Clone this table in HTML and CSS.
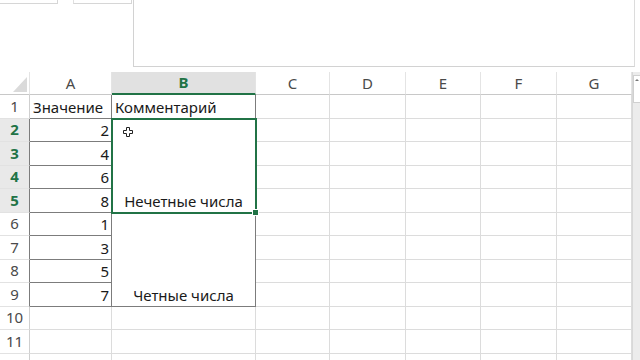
FILE: index.html
```html
<!DOCTYPE html>
<html lang="ru">
<head>
<meta charset="utf-8">
<title>Лист1</title>
<link rel="stylesheet" href="styles.css">
</head>
<body>
<div class="top">
  <div class="top-left">
    <div class="tab tab-a"></div>
    <div class="tab tab-b"></div>
  </div>
  <div class="panel"></div>
</div>
<div class="sheet">
  <div class="grid">
    <!-- column headers -->
    <div class="c corner"><span class="tri"></span></div>
    <div class="c ch">A</div>
    <div class="c ch sel">B</div>
    <div class="c ch">C</div>
    <div class="c ch">D</div>
    <div class="c ch">E</div>
    <div class="c ch">F</div>
    <div class="c ch">G</div>

    <!-- row 1 -->
    <div class="c rh">1</div>
    <div class="c d">Значение</div>
    <div class="c d b1">Комментарий</div>
    <div class="c"></div><div class="c"></div><div class="c"></div><div class="c"></div><div class="c"></div>

    <!-- row 2 -->
    <div class="c rh rsel dl">2</div>
    <div class="c d num">2</div>
    <div class="c d merge selected">
      <svg class="cursor" width="10" height="10" viewBox="0 0 10 10"><path d="M3.5 0.5h3v3h3v3h-3v3h-3v-3h-3v-3h3z" fill="#fff" stroke="#222" stroke-width="1"/></svg>
      Нечетные числа
      <span class="handle"></span>
    </div>
    <div class="c"></div><div class="c"></div><div class="c"></div><div class="c"></div><div class="c"></div>

    <!-- row 3 -->
    <div class="c rh rsel dl">3</div>
    <div class="c d num">4</div>
    <div class="c"></div><div class="c"></div><div class="c"></div><div class="c"></div><div class="c"></div>

    <!-- row 4 -->
    <div class="c rh rsel dl">4</div>
    <div class="c d num">6</div>
    <div class="c"></div><div class="c"></div><div class="c"></div><div class="c"></div><div class="c"></div>

    <!-- row 5 -->
    <div class="c rh rsel dl">5</div>
    <div class="c d num">8</div>
    <div class="c"></div><div class="c"></div><div class="c"></div><div class="c"></div><div class="c"></div>

    <!-- row 6 -->
    <div class="c rh dl">6</div>
    <div class="c d num">1</div>
    <div class="c d merge">Четные числа</div>
    <div class="c"></div><div class="c"></div><div class="c"></div><div class="c"></div><div class="c"></div>

    <!-- row 7 -->
    <div class="c rh dl">7</div>
    <div class="c d num">3</div>
    <div class="c"></div><div class="c"></div><div class="c"></div><div class="c"></div><div class="c"></div>

    <!-- row 8 -->
    <div class="c rh dl">8</div>
    <div class="c d num">5</div>
    <div class="c"></div><div class="c"></div><div class="c"></div><div class="c"></div><div class="c"></div>

    <!-- row 9 -->
    <div class="c rh dl">9</div>
    <div class="c d num">7</div>
    <div class="c"></div><div class="c"></div><div class="c"></div><div class="c"></div><div class="c"></div>

    <!-- row 10 -->
    <div class="c rh">10</div>
    <div class="c"></div><div class="c"></div><div class="c"></div><div class="c"></div><div class="c"></div><div class="c"></div><div class="c"></div>

    <!-- row 11 -->
    <div class="c rh">11</div>
    <div class="c"></div><div class="c"></div><div class="c"></div><div class="c"></div><div class="c"></div><div class="c"></div><div class="c"></div>

    <!-- row 12, only its top edge is in view -->
    <div class="c rh"></div>
    <div class="c"></div><div class="c"></div><div class="c"></div><div class="c"></div><div class="c"></div><div class="c"></div><div class="c"></div>
  </div>
  <div class="vscroll">
    <div class="vs-up"><span class="arrow"></span></div>
  </div>
</div>
</body>
</html>
```

FILE: styles.css
```css
html, body {
  margin: 0;
  padding: 0;
  background: #fff;
  overflow: hidden;
}

body {
  width: 640px;
  height: 360px;
  font-family: "Noto Sans", "Open Sans", sans-serif;
  color: #1a1a1a;
}

/* ribbon remnants above the sheet */
.top {
  display: flex;
  height: 72px;
}

.top-left {
  display: flex;
  align-items: flex-start;
  width: 133px;
  flex: none;
}

.tab {
  height: 3px;
  border-bottom: 1px solid #d6d6d6;
  border-right: 1px solid #d6d6d6;
}

.tab-a {
  width: 57px;
}

.tab-b {
  width: 57px;
  margin-left: 15px;
  border-left: 1px solid #e0e0e0;
}

.panel {
  width: 502px;
  height: 67px;
  border-left: 1px solid #d2d2d2;
  border-right: 1px solid #dcdcdc;
  border-bottom: 1px solid #d2d2d2;
  box-sizing: border-box;
}

/* worksheet */
.sheet {
  display: flex;
  height: 288px;
}

.grid {
  display: grid;
  grid-template-columns: 30px 82px 144px 74px 76px 75px 76px 75px;
  grid-template-rows: 23px repeat(12, 23.5px);
  width: 632px;
  flex: none;
}

.c {
  box-sizing: border-box;
  border-right: 1px solid #dcdcdc;
  border-bottom: 1px solid #dcdcdc;
  display: flex;
  align-items: flex-end;
  padding: 0 3px 3px;
  font-size: 15px;
  line-height: 1;
  white-space: nowrap;
  overflow: hidden;
}

/* column and row headings */
.corner {
  position: relative;
  border-right-color: #e4e4e4;
  border-bottom-color: #c8c8c8;
}

.tri {
  position: absolute;
  right: 2px;
  bottom: 2px;
  width: 14px;
  height: 15px;
  background: #dadada;
  clip-path: polygon(100% 0, 100% 100%, 0 100%);
}

.ch {
  justify-content: center;
  align-items: center;
  padding: 0;
  color: #4a4a4a;
  font-size: 15px;
  border-right-color: #e4e4e4;
  border-bottom-color: #c8c8c8;
}

.ch.sel {
  background: #e1e1e1;
  color: #217346;
  font-weight: bold;
  border-bottom: 2px solid #217346;
}

.rh {
  justify-content: center;
  align-items: center;
  padding: 0;
  color: #4a4a4a;
  font-size: 15px;
  border-right-color: #cfcfcf;
  border-bottom-color: #e2e2e2;
}

.rh.rsel {
  background: #e9e9e9;
  color: #217346;
  font-weight: bold;
}

.rh.dl {
  border-right-color: #7c7c7c;
}

/* data block with thin borders */
.d {
  border-right-color: #7c7c7c;
  border-bottom-color: #7c7c7c;
}

.b1 {
  border-bottom-color: #217346;
}

.num {
  justify-content: flex-end;
  padding-right: 2px;
}

.merge {
  grid-row: span 4;
  justify-content: center;
  position: relative;
  overflow: visible;
}

.selected {
  outline: 2px solid #217346;
  outline-offset: -1px;
  z-index: 1;
}

.cursor {
  position: absolute;
  left: 11px;
  top: 8px;
}

.handle {
  position: absolute;
  right: -4px;
  bottom: -4px;
  width: 5px;
  height: 5px;
  background: #217346;
  border: 1px solid #fff;
}

/* vertical scrollbar */
.vscroll {
  width: 8px;
  flex: none;
  background: #ececec;
  border-left: 1px solid #d8d8d8;
  box-sizing: border-box;
  padding-top: 3px;
}

.vs-up {
  height: 28px;
  background: #fff;
  border: 1px solid #d0d0d0;
  border-right: none;
  box-sizing: border-box;
  display: flex;
  justify-content: center;
  padding-top: 3px;
}

.arrow {
  width: 0;
  height: 0;
  border-left: 2px solid transparent;
  border-right: 2px solid transparent;
  border-bottom: 2px solid #777;
}
```
